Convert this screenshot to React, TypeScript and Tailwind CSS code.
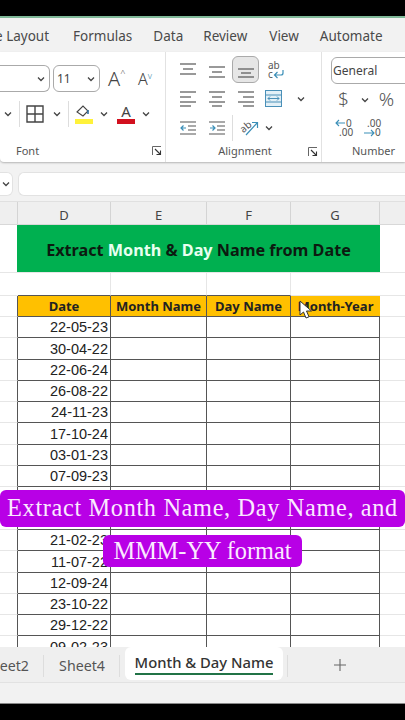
const rows = [
  "22-05-23", "30-04-22", "22-06-24", "26-08-22", "24-11-23", "17-10-24", "03-01-23", "07-09-23",
  "", "", "21-02-23", "11-07-22", "12-09-24", "23-10-22", "29-12-22", "09-02-23",
];

function Chevron({ className = "" }: { className?: string }) {
  return (
    <svg width="8" height="6" viewBox="0 0 8 6" className={`shrink-0 ${className}`}>
      <path d="M1 1.5 4 4.5 7 1.5" fill="none" stroke="#444" strokeWidth="1.3" />
    </svg>
  );
}

// align icon made of horizontal bars, x1/x2 per bar
function Bars({ lines, w = 16, h = 16, className = "" }: { lines: number[][]; w?: number; h?: number; className?: string }) {
  return (
    <svg width={w} height={h} viewBox={`0 0 ${w} ${h}`} className={`shrink-0 ${className}`}>
      {lines.map(([x1, x2, y], i) => (
        <line key={i} x1={x1} x2={x2} y1={y} y2={y} stroke="#555" strokeWidth="1.2" />
      ))}
    </svg>
  );
}

function Launcher() {
  return (
    <svg width="10" height="10" viewBox="0 0 10 10" className="shrink-0">
      <path d="M9 .5H.5V9" fill="none" stroke="#666" />
      <path d="M3 3 8.500 8.500M8.500 4.500v4h-4" fill="none" stroke="#333" strokeWidth="1.1" />
    </svg>
  );
}

function FontGroup() {
  return (
    <div className="w-[166px] shrink-0 h-full flex flex-col border-r border-[#e2e2e2] relative">
      <div className="flex items-center h-[27px] mt-[13px]">
        <div className="w-[50px] h-[27px] border border-[#aaa] border-l-0 rounded-r-md flex items-center justify-end pr-[4px]">
          <Chevron />
        </div>
        <div className="ml-[3px] w-[47px] h-[27px] border border-[#aaa] rounded-md flex items-center justify-between pl-[3px] pr-[4px] text-[12px] text-[#444]">
          11
          <Chevron />
        </div>
        <div className="ml-[8px] w-[19px] text-[#444] text-[20px] font-light leading-none flex">
          A<span className="text-[9px] text-[#555]">^</span>
        </div>
        <div className="ml-[11px] text-[#444] text-[16px] font-light leading-none flex">
          A<span className="text-[9px] text-[#4a90b0]">v</span>
        </div>
      </div>
      <div className="flex items-center h-[28px] mt-[8px]">
        <Chevron className="ml-[4px]" />
        <div className="ml-[7px] w-px h-[26px] bg-[#ddd]" />
        <svg width="18" height="18" viewBox="0 0 18 18" className="ml-[6px] shrink-0">
          <path d="M1 1h16v16H1zM9 1v16M1 9h16" fill="none" stroke="#444" strokeWidth="1.4" />
        </svg>
        <Chevron className="ml-[9px]" />
        <div className="ml-[7px] w-px h-[26px] bg-[#ddd]" />
        <svg width="18" height="20" viewBox="0 0 18 20" className="ml-[6px] shrink-0">
          <path d="M2 8 8 2l5 5-5 5z" fill="none" stroke="#444" strokeWidth="1.1" />
          <path d="M13 6v4" stroke="#2f6f9f" strokeWidth="1.6" />
          <rect x="0" y="15" width="18" height="5" fill="#fff23a" />
        </svg>
        <Chevron className="ml-[7px]" />
        <div className="ml-[9px] w-[18px] flex flex-col items-center">
          <span className="text-[15px] leading-[15px] text-[#444]">A</span>
          <div className="w-[18px] h-[5px] bg-[#d2101e]" />
        </div>
        <Chevron className="ml-[7px]" />
      </div>
      <div className="mt-auto h-[22px] mb-0 flex items-center justify-between pl-[16px] pr-[3px] text-[11px] text-[#555]">
        Font
        <Launcher />
      </div>
    </div>
  );
}

function AlignGroup() {
  return (
    <div className="w-[156px] shrink-0 h-full flex flex-col border-r border-[#e2e2e2]">
      <div className="flex items-center h-[27px] mt-[4px] pl-[14px]">
        <Bars lines={[[0, 16, 2], [3, 13, 7], [0, 16, 12]]} />
        <Bars lines={[[0, 16, 5], [3, 13, 10], [0, 16, 15]]} className="ml-[13px]" />
        <div className="ml-[7px] w-[27px] h-[27px] rounded-md border border-[#aaa] bg-[#e6e6e6] flex items-center justify-center">
          <Bars lines={[[0, 16, 7], [3, 13, 11], [0, 16, 15]]} />
        </div>
        <svg width="18" height="18" viewBox="0 0 18 18" className="ml-[8px] shrink-0">
          <text x="1" y="8" fontSize="10" fill="#555" fontFamily="Noto Sans, sans-serif">ab</text>
          <text x="1" y="17" fontSize="10" fill="#555" fontFamily="Noto Sans, sans-serif">c</text>
          <path d="M16 9v3q0 2-2 2H8M10.500 11 7.500 14l3 3" fill="none" stroke="#3b8fb8" strokeWidth="1.2" />
        </svg>
      </div>
      <div className="flex items-center h-[18px] mt-[7px] pl-[14px]">
        <Bars lines={[[0, 16, 2], [0, 11, 7], [0, 16, 12], [0, 11, 16]]} w={16} h={18} />
        <Bars lines={[[0, 16, 2], [3, 13, 7], [0, 16, 12], [3, 13, 16]]} w={16} h={18} className="ml-[13px]" />
        <Bars lines={[[0, 16, 2], [5, 16, 7], [0, 16, 12], [5, 16, 16]]} w={16} h={18} className="ml-[13px]" />
        <svg width="18" height="18" viewBox="0 0 18 18" className="ml-[11px] shrink-0">
          <rect x=".5" y=".5" width="16" height="16" fill="#e3f0f7" stroke="#4a90b8" />
          <path d="M.5 5h16M.5 12h16M3 8.500h11M5 6.500l-2 2 2 2M12 6.500l2 2-2 2" fill="none" stroke="#4a90b8" />
        </svg>
        <Chevron className="ml-[14px]" />
      </div>
      <div className="flex items-center h-[26px] mt-[7px] pl-[14px]">
        <svg width="16" height="16" viewBox="0 0 16 16" className="shrink-0">
          <path d="M0 2h16M8 6h8M8 10h8M0 14h16" stroke="#555" strokeWidth="1.2" />
          <path d="M6 8H1M3.500 5.500 1 8l2.500 2.500" fill="none" stroke="#3b8fb8" strokeWidth="1.2" />
        </svg>
        <svg width="16" height="16" viewBox="0 0 16 16" className="ml-[13px] shrink-0">
          <path d="M0 2h16M8 6h8M8 10h8M0 14h16" stroke="#555" strokeWidth="1.2" />
          <path d="M1 8h5M3.500 5.500 6 8l-2.500 2.500" fill="none" stroke="#3b8fb8" strokeWidth="1.2" />
        </svg>
        <div className="ml-[7px] w-px h-[26px] bg-[#ddd]" />
        <svg width="19" height="18" viewBox="0 0 19 18" className="ml-[7px] shrink-0">
          <text x="0" y="11" fontSize="10" fill="#555" transform="rotate(-40 6 8)" fontFamily="Noto Sans, sans-serif">ab</text>
          <path d="M6 16 17 4M12 3.500h5.500V9" fill="none" stroke="#3b8fb8" strokeWidth="1.2" />
        </svg>
        <Chevron className="ml-[6px]" />
      </div>
      <div className="mt-auto h-[22px] relative flex items-center justify-center pl-[3px] text-[11px] text-[#555]">
        Alignment
        <div className="absolute right-[3px] top-[6px] flex">
          <Launcher />
        </div>
      </div>
    </div>
  );
}

function NumberGroup() {
  return (
    <div className="flex-1 h-full flex flex-col pl-[9px] overflow-hidden">
      <div className="mt-[5px] h-[27px] w-[90px] shrink-0 border border-[#aaa] rounded-md flex items-center pl-[1px] text-[12px] text-[#444]">
        General
      </div>
      <div className="flex items-center h-[22px] mt-[5px] text-[#555]">
        <span className="ml-[7px] text-[19px] font-light leading-none">$</span>
        <Chevron className="ml-[12px]" />
        <span className="ml-[10px] text-[19px] font-light leading-none">%</span>
      </div>
      <div className="flex items-center h-[24px] mt-[6px]">
        <svg width="20" height="20" viewBox="0 0 20 20" className="ml-[4px] shrink-0">
          <text x="11" y="9" fontSize="10" fill="#555" fontFamily="Noto Sans, sans-serif">0</text>
          <text x="4" y="18" fontSize="10" fill="#555" fontFamily="Noto Sans, sans-serif">.00</text>
          <path d="M10 5H1M4 2 1 5l3 3" fill="none" stroke="#3b8fb8" strokeWidth="1.1" />
        </svg>
        <svg width="20" height="20" viewBox="0 0 20 20" className="ml-[8px] shrink-0">
          <text x="4" y="9" fontSize="10" fill="#555" fontFamily="Noto Sans, sans-serif">.00</text>
          <text x="12" y="18" fontSize="10" fill="#555" fontFamily="Noto Sans, sans-serif">0</text>
          <path d="M1 15h10M8 12l3 3-3 3" fill="none" stroke="#3b8fb8" strokeWidth="1.1" />
        </svg>
      </div>
      <div className="mt-auto h-[22px] flex items-center pl-[21px] text-[11px] text-[#555]">Number</div>
    </div>
  );
}

function Cell({ w, className = "", children }: { w: string; className?: string; children?: React.ReactNode }) {
  return <div className={`${w} shrink-0 h-full ${className}`}>{children}</div>;
}

function Sheet() {
  return (
    <div className="flex-1 min-h-0 overflow-hidden bg-white">
      {/* column letters */}
      <div className="flex h-[23px] bg-[#efefef] border-b border-[#d8d8d8] text-[13px] text-[#444]">
        <Cell w="w-[18px]" className="border-r border-[#d4d4d4]" />
        {[["w-[93px]", "D"], ["w-[96px]", "E"], ["w-[84px]", "F"], ["w-[89px]", "G"]].map(([w, l]) => (
          <Cell key={l} w={w} className="border-r border-[#d4d4d4] flex items-center justify-center pt-[5px]">
            {l}
          </Cell>
        ))}
      </div>
      {/* merged title */}
      <div className="flex h-[48px] border-b border-[#e6e6e6]">
        <Cell w="w-[17px]" />
        <div className="w-[363px] h-full bg-[#00b050] flex items-center justify-center pt-[3px] text-[16.2px] font-bold text-[#0c1a10]">
          <span>
            Extract <span className="text-[#e8fff0]">Month</span> &amp; <span className="text-[#e8fff0]">Day</span> Name from Date
          </span>
        </div>
      </div>
      {/* blank row */}
      <div className="flex h-[23px]">
        <Cell w="w-[18px]" className="border-b border-[#e6e6e6]" />
        <Cell w="w-[93px]" className="border-r border-b border-r-[#e6e6e6] border-b-[#555]" />
        <Cell w="w-[96px]" className="border-r border-b border-r-[#e6e6e6] border-b-[#555]" />
        <Cell w="w-[84px]" className="border-r border-b border-r-[#e6e6e6] border-b-[#555]" />
        <Cell w="w-[89px]" className="border-b border-[#e6e6e6]" />
        <div className="flex-1 border-b border-[#e6e6e6]" />
      </div>
      {/* header row */}
      <div className="flex h-[21px] text-[13px] font-bold text-[#222]">
        <Cell w="w-[18px]" className="border-r border-b border-r-[#555] border-b-[#e6e6e6]" />
        {[["w-[93px]", "Date"], ["w-[96px]", "Month Name"], ["w-[84px]", "Day Name"], ["w-[89px]", "Month-Year"]].map(([w, l]) => (
          <Cell key={l} w={w} className={`bg-[#ffc000] border-b border-[#555] flex items-center justify-center pt-px ${l === "Month-Year" ? "" : "border-r"}`}>
            {l}
          </Cell>
        ))}
        <div className="flex-1 border-b border-[#e6e6e6]" />
      </div>
      {rows.map((d, i) => (
        <div key={i} className="flex h-[21.3px] font-['Liberation_Sans',sans-serif] text-[14.5px] text-[#222]">
          <Cell w="w-[18px]" className="border-r border-b border-r-[#555] border-b-[#e6e6e6]" />
          <Cell w="w-[93px]" className="border-r border-b border-[#555] flex items-center justify-end pr-[2px] pt-[2px]">
            {d}
          </Cell>
          <Cell w="w-[96px]" className="border-r border-b border-[#555]" />
          <Cell w="w-[84px]" className="border-r border-b border-[#555]" />
          <Cell w="w-[89px]" className="border-r border-b border-[#555]" />
          <div className="flex-1 border-b border-[#e6e6e6]" />
        </div>
      ))}
    </div>
  );
}

export default function App() {
  return (
    <div className="relative w-[405px] h-[720px] overflow-hidden bg-[#f2f2f2] flex flex-col font-['Noto_Sans',sans-serif]">
      <div className="h-[16px] shrink-0 bg-black" />
      <div className="h-[2px] shrink-0 bg-[#7fb898]" />

      {/* menu tabs */}
      <div className="h-[34px] shrink-0 flex items-center pt-[2px] whitespace-nowrap text-[13.5px] text-[#4a4a4a] overflow-hidden">
        <span className="ml-[-29px] mr-[24px] shrink-0">Page Layout</span>
        <span className="mr-[21px]">Formulas</span>
        <span className="mr-[20px]">Data</span>
        <span className="mr-[22px]">Review</span>
        <span className="mr-[21px]">View</span>
        <span>Automate</span>
      </div>

      {/* ribbon */}
      <div className="h-[110px] shrink-0 flex bg-white rounded-bl-sm shadow-[0_1px_2px_rgba(0,0,0,0.25)]">
        <FontGroup />
        <AlignGroup />
        <NumberGroup />
      </div>

      {/* formula bar */}
      <div className="h-[40px] shrink-0 flex items-center pt-[4px] gap-[5px] border-b border-[#e0e0e0]">
        <div className="w-[13px] h-[24px] bg-white rounded-r-md border border-l-0 border-[#e2e2e2] flex items-center justify-center">
          <Chevron />
        </div>
        <div className="flex-1 h-[24px] bg-white rounded-l-md border border-r-0 border-[#e2e2e2]" />
      </div>

      <Sheet />

      {/* sheet tabs */}
      <div className="h-[36px] shrink-0 flex items-center bg-[#efefef] whitespace-nowrap text-[14.2px] text-[#555] border-b border-[#e2e2e2]">
        <div className="w-[44px] h-[22px] mt-[3px] flex items-center justify-end pr-[14px] border-r border-[#ddd] overflow-hidden shrink-0">
          <span className="shrink-0">Sheet2</span>
        </div>
        <div className="w-[76px] h-[22px] mt-[3px] flex items-center justify-center pl-[1px] border-r border-[#ddd] shrink-0">Sheet4</div>
        <div className="ml-[5px] w-[158px] h-[33px] self-start bg-white rounded-md flex flex-col items-center justify-start pt-[5px] shrink-0">
          <span className="text-[14.8px] font-medium text-[#333] leading-[21px] border-b-2 border-[#217346]">Month &amp; Day Name</span>
        </div>
        <div className="ml-[4px] w-px h-[22px] mt-[3px] bg-[#ddd]" />
        <svg width="12" height="12" viewBox="0 0 12 12" className="ml-[46px] shrink-0">
          <path d="M6 0v12M0 6h12" stroke="#666" strokeWidth="1.1" />
        </svg>
      </div>
      <div className="h-[21px] shrink-0 bg-[#f2f2f2] border-b border-[#888]" />
      <div className="h-[16px] shrink-0 bg-black" />

      {/* caption over the sheet */}
      <div className="absolute left-0 top-[490px] w-[405px] h-[37px] bg-[#b800e6] rounded-md flex items-center justify-center font-['Liberation_Serif',serif] text-[24.3px] tracking-[0.66px] text-[#fbeaff] whitespace-nowrap">
        Extract Month Name, Day Name, and
      </div>
      <div className="absolute left-[103px] top-[535px] w-[199px] h-[32px] bg-[#b800e6] rounded-md flex items-center justify-center font-['Liberation_Serif',serif] text-[24.3px] text-[#fbeaff] whitespace-nowrap">
        MMM-YY format
      </div>

      {/* mouse pointer */}
      <svg width="14" height="20" viewBox="0 0 14 20" className="absolute left-[299px] top-[300px]">
        <path d="M1 1v14l3.500-3 2.500 6 3-1.200-2.500-5.800H12.500z" fill="#fff" stroke="#333" strokeWidth="1" />
      </svg>
    </div>
  );
}
